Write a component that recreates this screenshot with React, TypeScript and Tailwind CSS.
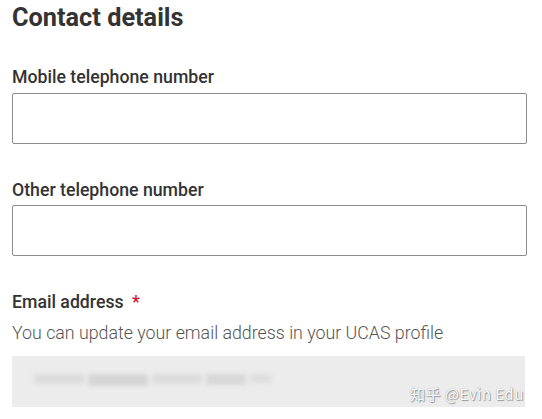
export default function App() {
  return (
    <div className="w-[542px] h-[419px] bg-white overflow-hidden relative text-[#333]" style={{ fontFamily: "Roboto, 'Liberation Sans', sans-serif" }}>
      <div className="pl-3 pr-[15px]">
        <h1 className="text-[25.3px] font-bold leading-[34px] pt-[1px]">Contact details</h1>

        <label className="block mt-[32px] text-[17.7px] font-medium leading-[20px]">Mobile telephone number</label>
        <div className="mt-[6px] h-[51px] border border-[#8c8c8c] rounded-[2px]"></div>

        <label className="block mt-[36px] text-[17.7px] font-medium leading-[20px]">Other telephone number</label>
        <div className="mt-[5px] h-[51px] border border-[#8c8c8c] rounded-[2px]"></div>

        <label className="block mt-[36px] text-[17.7px] font-medium leading-[20px]">
          Email address <span className="text-[#d0103a] ml-1">*</span>
        </label>
        <p className="mt-[10px] text-[17.8px] font-light leading-[22px] text-[#555]">You can update your email address in your UCAS profile</p>
        <div className="mt-[12px] h-[51px] mr-[2px] bg-[#ececec] relative">
          <div className="absolute left-[22px] top-[18px] flex gap-[4px] blur-[2px]">
            <div className="w-[50px] h-[10px] bg-[#dcdcdc]"></div>
            <div className="w-[60px] h-[12px] bg-[#d6d6d6]"></div>
            <div className="w-[50px] h-[10px] bg-[#dcdcdc]"></div>
            <div className="w-[40px] h-[11px] bg-[#d8d8d8]"></div>
            <div className="w-[22px] h-[9px] bg-[#dedede]"></div>
          </div>
        </div>
      </div>
      <div
        className="absolute left-[410px] top-[383px] text-[15px] text-white tracking-[0.5px]"
        style={{ fontFamily: "'Noto Sans CJK SC', 'Liberation Sans', sans-serif", textShadow: "0 0 1px #888, 1px 1px 1px #999" }}
      >
        知乎 @Evin Edu
      </div>
    </div>
  );
}
